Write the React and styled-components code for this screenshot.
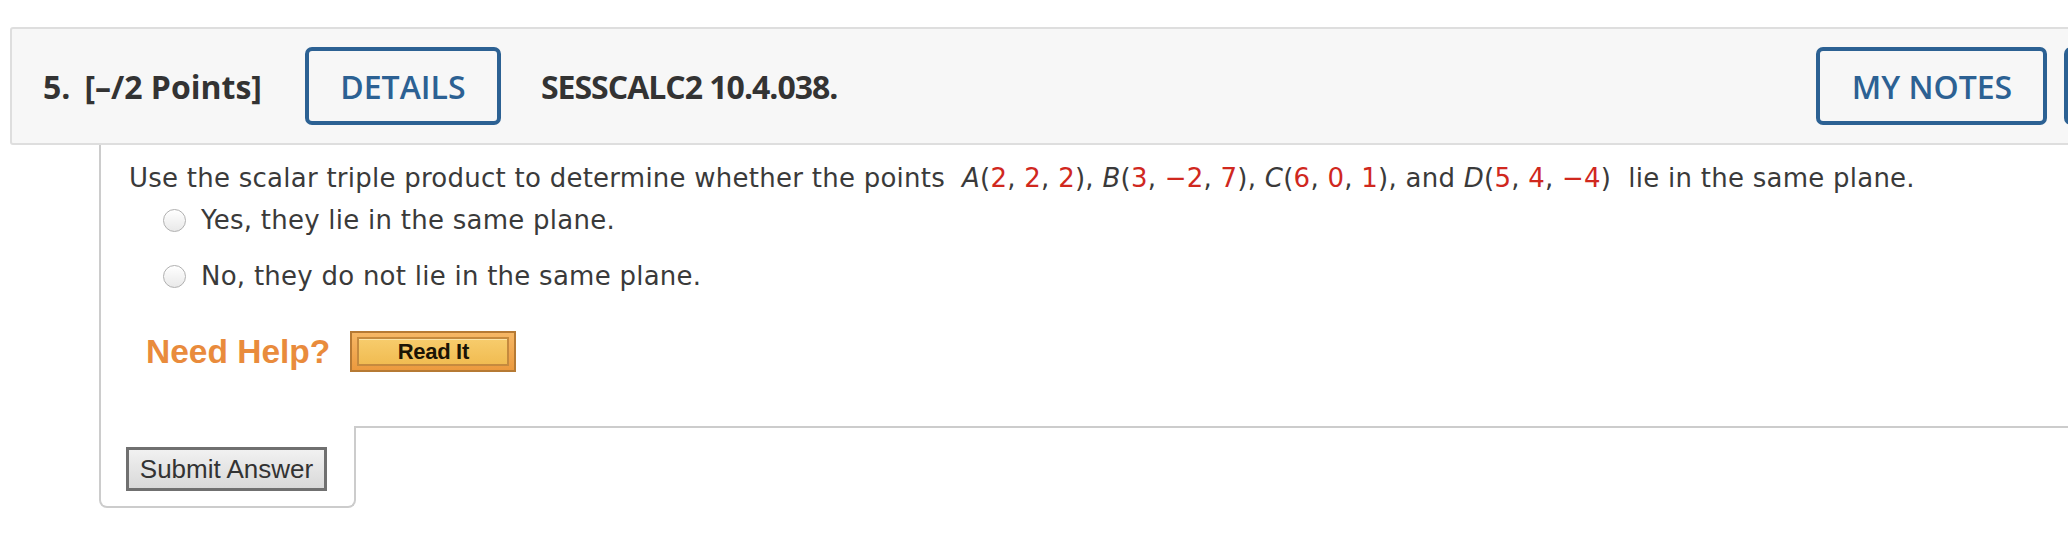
import styled, { createGlobalStyle } from 'styled-components';

const GlobalStyle = createGlobalStyle`
  html, body {
    margin: 0;
    padding: 0;
    background: #ffffff;
    overflow: hidden;
  }
`

function Radio({ label }) {
  return (
    <Option>
      <RadioDot />
      <span>{label}</span>
    </Option>
  );
}

function Point({ name, coords }) {
  return (
    <>
      <Var>{name}</Var>(
      {coords.map((c, i) => (
        <span key={i}>
          <Num>{c}</Num>{i < coords.length - 1 ? ', ' : ''}
        </span>
      ))}
      )
    </>
  );
}

function App() {
  return (
    <Page>
      <GlobalStyle />
      <Header>
        <QNum>5.</QNum>
        <Points>[–/2 Points]</Points>
        <OutlineButton>DETAILS</OutlineButton>
        <Code>SESSCALC2 10.4.038.</Code>
        <Spacer />
        <OutlineButton $wide>MY NOTES</OutlineButton>
        {/* next button is off-screen, only its left edge shows */}
        <OutlineButton aria-label="Ask your teacher" />
      </Header>

      <Body>
        <Question>
          Use the scalar triple product to determine whether the points{'\u00a0 '}
          <Point name="A" coords={['2', '2', '2']} />,{' '}
          <Point name="B" coords={['3', '−2', '7']} />,{' '}
          <Point name="C" coords={['6', '0', '1']} />, and{' '}
          <Point name="D" coords={['5', '4', '−4']} />{'\u00a0 '}
          lie in the same plane.
        </Question>
        <Options>
          <Radio label="Yes, they lie in the same plane." />
          <Radio label="No, they do not lie in the same plane." />
        </Options>
        <HelpRow>
          <NeedHelp>Need Help?</NeedHelp>
          <ReadIt>
            <ReadItInner>Read It</ReadItInner>
          </ReadIt>
        </HelpRow>
      </Body>

      <Footer>
        <SubmitTab>
          <SubmitButton>Submit Answer</SubmitButton>
        </SubmitTab>
        <FooterRule />
      </Footer>
    </Page>
  );
}

const Page = styled.div`
  padding: 27px 0 0 10px;
  width: 2068px;
  overflow: hidden;
`

const Header = styled.div`
  display: flex;
  align-items: center;
  box-sizing: border-box;
  height: 118px;
  margin-right: -400px;
  padding: 0 0 0 31px;
  background: #f7f7f7;
  border: 2px solid #dedede;
  border-radius: 3px;
  font-family: "Open Sans", "Liberation Sans", sans-serif;
  font-size: 32px;
  color: #333333;
`

const QNum = styled.span`
  font-weight: 700;
  margin-right: 14px;
`

const Points = styled.span`
  font-weight: 700;
  margin-right: 43px;
`

const Code = styled.span`
  font-weight: 700;
  margin-left: 23px;
  letter-spacing: -1px;
`

const Spacer = styled.div`
  width: 979px;
  flex: none;
`

const OutlineButton = styled.div`
  box-sizing: border-box;
  height: 78px;
  width: ${p => (p.$wide ? '231px' : '196px')};
  flex: none;
  display: flex;
  align-items: center;
  justify-content: center;
  border: 4px solid #2c6193;
  border-radius: 7px;
  color: #2c6193;
  font-weight: 600;
  margin-right: 17px;
  white-space: nowrap;
  overflow: hidden;
`

const Body = styled.div`
  margin-left: 89px;
  border-left: 2px solid #cccccc;
  padding: 14px 0 54px 28px;
  font-family: Verdana, "DejaVu Sans", sans-serif;
  font-size: 26px;
  letter-spacing: 0.25px;
  color: #3a3a3a;
`

const Question = styled.div`
  line-height: 38px;
  white-space: nowrap;
`

const Var = styled.i`
  font-style: italic;
`

const Num = styled.span`
  color: #d0281e;
`

const Options = styled.div`
  display: flex;
  flex-direction: column;
  gap: 16px;
  margin-top: 3px;
  padding-left: 34px;
`

const Option = styled.label`
  display: flex;
  align-items: center;
  gap: 15px;
  height: 40px;
`

const RadioDot = styled.span`
  width: 23px;
  height: 23px;
  box-sizing: border-box;
  border-radius: 50%;
  border: 1px solid #b0b0b0;
  background: linear-gradient(#ffffff, #e9e9e9);
  box-shadow: inset 0 1px 1px rgba(255, 255, 255, 0.8);
  flex: none;
`

const HelpRow = styled.div`
  display: flex;
  align-items: center;
  gap: 20px;
  margin-top: 35px;
  padding-left: 17px;
  letter-spacing: 0;
`

const NeedHelp = styled.span`
  font-family: Arial, "Liberation Sans", sans-serif;
  font-weight: 700;
  font-size: 33.5px;
  color: #e98b3c;
`

const ReadIt = styled.div`
  box-sizing: border-box;
  width: 166px;
  height: 41px;
  padding: 4px 5px;
  background: linear-gradient(#f6b765, #ec9a3e);
  border: 2px solid #b67a34;
`

const ReadItInner = styled.div`
  box-sizing: border-box;
  height: 100%;
  display: flex;
  align-items: center;
  justify-content: center;
  background: linear-gradient(#f7cc6c, #f1bc52);
  border: 2px solid #c58a3e;
  box-shadow: inset 0 1px 0 #fbe3a6;
  font-family: Arial, "Liberation Sans", sans-serif;
  font-weight: 700;
  font-size: 22px;
  letter-spacing: -0.3px;
  color: #1b1405;
`

const Footer = styled.div`
  display: flex;
  align-items: flex-start;
  margin-left: 89px;
  margin-right: -20px;
`

const SubmitTab = styled.div`
  box-sizing: border-box;
  width: 257px;
  padding: 21px 0 15px 25px;
  border: 2px solid #cccccc;
  border-top: none;
  border-radius: 0 0 8px 8px;
`

const SubmitButton = styled.button`
  box-sizing: border-box;
  width: 201px;
  height: 44px;
  padding: 0;
  border: 3px solid #707070;
  background: linear-gradient(#f1f1f1, #d9d9d9);
  font-family: Arial, "Liberation Sans", sans-serif;
  font-size: 26px;
  color: #333333;
`

const FooterRule = styled.div`
  flex: 1;
  border-top: 2px solid #cccccc;
  margin-left: -2px;
`

export default App;
